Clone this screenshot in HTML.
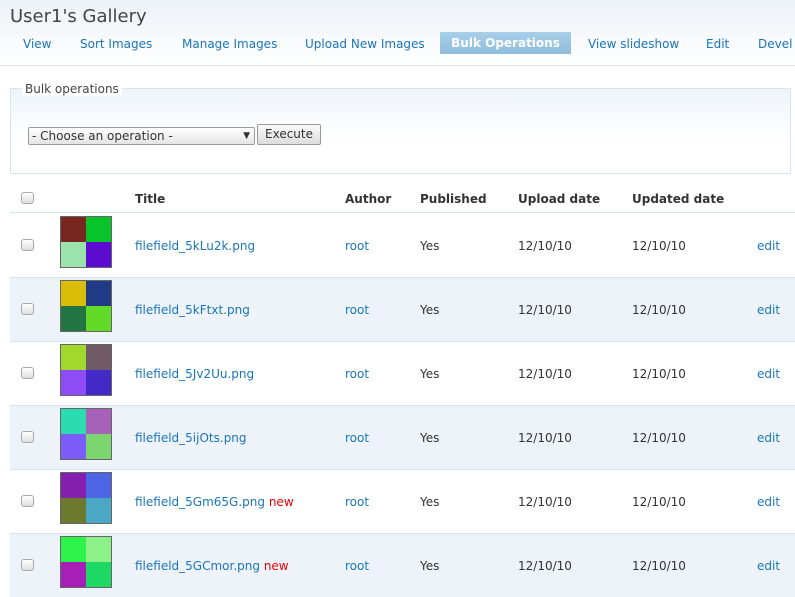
<!DOCTYPE html>
<html><head><meta charset="utf-8"><style>
body{margin:0;width:795px;height:596px;overflow:hidden;background:#fff;font-family:"DejaVu Sans","Liberation Sans",sans-serif;font-size:12px;color:#333;position:relative}
.a{position:absolute;white-space:nowrap;margin-top:1px}
.hdr{position:absolute;left:0;top:0;width:795px;height:65px;background:linear-gradient(#edf2f8,#fff);border-bottom:1px solid #e3e8ee}
.tab{color:#1a75bb;top:36px}
.act{position:absolute;left:440px;top:32px;width:131px;height:22px;background:linear-gradient(#a9cfe8,#8fbddd);color:#fff;font-weight:bold;text-align:center;line-height:23px}
.fs{position:absolute;left:10px;top:88px;width:779px;height:84px;border:1px solid #d6e4ef;background:linear-gradient(#eef4fa,#fff 60%)}
.row{position:absolute;left:10px;width:785px;height:63px;border-top:1px solid #d8e4ee}
.cb{position:absolute;left:21px;width:11px;height:10px;border:1px solid #aaa;border-radius:3px;background:linear-gradient(#fff,#ddd)}
.th{position:absolute;left:60px;width:50px;height:50px;border:1px solid #666;display:grid;grid-template-columns:1fr 1fr}
.th i{display:block}
.lk{color:#1a75bb}
.new{color:#e00}
</style></head><body>
<div class="hdr"></div>
<div class="a" style="left:10px;top:5px;font-size:18px;color:#444">User1's Gallery</div>
<div class="a tab" style="left:23px">View</div>
<div class="a tab" style="left:80px">Sort Images</div>
<div class="a tab" style="left:182px">Manage Images</div>
<div class="a tab" style="left:305px">Upload New Images</div>
<div class="act">Bulk Operations</div>
<div class="a tab" style="left:588px">View slideshow</div>
<div class="a tab" style="left:706px">Edit</div>
<div class="a tab" style="left:758px">Devel</div>
<div class="fs"></div>
<div class="a" style="left:22px;top:81px;background:#fff;padding:0 3px;color:#444">Bulk operations</div>
<div class="a" style="left:28px;top:126px;width:222px;height:16px;border:1px solid #999;border-radius:2px;background:linear-gradient(#fff,#e4e4e4);font-size:12px;line-height:16px;color:#333;padding-left:3px">- Choose an operation -<span style="position:absolute;right:4px;font-size:9px">▼</span></div>
<div class="a" style="left:257px;top:123px;width:62px;height:19px;border:1px solid #999;border-radius:2px;background:linear-gradient(#fafafa,#ddd);text-align:center;line-height:19px;font-size:12px">Execute</div>
<div class="cb" style="top:192px"></div>
<div class="a" style="left:135px;top:191px;font-weight:bold">Title</div>
<div class="a" style="left:345px;top:191px;font-weight:bold">Author</div>
<div class="a" style="left:420px;top:191px;font-weight:bold">Published</div>
<div class="a" style="left:518px;top:191px;font-weight:bold">Upload date</div>
<div class="a" style="left:632px;top:191px;font-weight:bold">Updated date</div>
<div style="position:absolute;left:10px;top:212px;width:785px;height:2px;background:#d4e4f0"></div>

<div class="row" style="top:213px;background:#fff;border-top:none"></div>
<div class="row" style="top:277px;background:#edf3f9"></div>
<div class="row" style="top:341px;background:#fff"></div>
<div class="row" style="top:405px;background:#edf3f9"></div>
<div class="row" style="top:469px;background:#fff"></div>
<div class="row" style="top:533px;background:#edf3f9"></div>

<div class="cb" style="top:239px"></div><div class="th" style="top:216px"><i style="background:#7a2620"></i><i style="background:#08c42a"></i><i style="background:#9ae3ac"></i><i style="background:#5c0bd0"></i></div>
<div class="a lk" style="left:135px;top:238px">filefield_5kLu2k.png</div>
<div class="cb" style="top:303px"></div><div class="th" style="top:280px"><i style="background:#d9bd08"></i><i style="background:#203a85"></i><i style="background:#237443"></i><i style="background:#62da28"></i></div>
<div class="a lk" style="left:135px;top:302px">filefield_5kFtxt.png</div>
<div class="cb" style="top:367px"></div><div class="th" style="top:344px"><i style="background:#a0d82e"></i><i style="background:#705a66"></i><i style="background:#8d4cf5"></i><i style="background:#4329c8"></i></div>
<div class="a lk" style="left:135px;top:366px">filefield_5Jv2Uu.png</div>
<div class="cb" style="top:431px"></div><div class="th" style="top:408px"><i style="background:#2bdcb0"></i><i style="background:#a662b8"></i><i style="background:#7c5cf8"></i><i style="background:#7cd670"></i></div>
<div class="a lk" style="left:135px;top:430px">filefield_5ijOts.png</div>
<div class="cb" style="top:495px"></div><div class="th" style="top:472px"><i style="background:#851fb0"></i><i style="background:#4d66e6"></i><i style="background:#6b7a2f"></i><i style="background:#4aa8c4"></i></div>
<div class="a lk" style="left:135px;top:494px">filefield_5Gm65G.png <span class="new">new</span></div>
<div class="cb" style="top:559px"></div><div class="th" style="top:536px"><i style="background:#2cf24a"></i><i style="background:#8ef088"></i><i style="background:#a81fb8"></i><i style="background:#1ed864"></i></div>
<div class="a lk" style="left:135px;top:558px">filefield_5GCmor.png <span class="new">new</span></div>

<div class="a lk" style="left:345px;top:238px">root</div><div class="a" style="left:420px;top:238px">Yes</div><div class="a" style="left:518px;top:238px">12/10/10</div><div class="a" style="left:632px;top:238px">12/10/10</div><div class="a lk" style="left:757px;top:238px">edit</div>
<div class="a lk" style="left:345px;top:302px">root</div><div class="a" style="left:420px;top:302px">Yes</div><div class="a" style="left:518px;top:302px">12/10/10</div><div class="a" style="left:632px;top:302px">12/10/10</div><div class="a lk" style="left:757px;top:302px">edit</div>
<div class="a lk" style="left:345px;top:366px">root</div><div class="a" style="left:420px;top:366px">Yes</div><div class="a" style="left:518px;top:366px">12/10/10</div><div class="a" style="left:632px;top:366px">12/10/10</div><div class="a lk" style="left:757px;top:366px">edit</div>
<div class="a lk" style="left:345px;top:430px">root</div><div class="a" style="left:420px;top:430px">Yes</div><div class="a" style="left:518px;top:430px">12/10/10</div><div class="a" style="left:632px;top:430px">12/10/10</div><div class="a lk" style="left:757px;top:430px">edit</div>
<div class="a lk" style="left:345px;top:494px">root</div><div class="a" style="left:420px;top:494px">Yes</div><div class="a" style="left:518px;top:494px">12/10/10</div><div class="a" style="left:632px;top:494px">12/10/10</div><div class="a lk" style="left:757px;top:494px">edit</div>
<div class="a lk" style="left:345px;top:558px">root</div><div class="a" style="left:420px;top:558px">Yes</div><div class="a" style="left:518px;top:558px">12/10/10</div><div class="a" style="left:632px;top:558px">12/10/10</div><div class="a lk" style="left:757px;top:558px">edit</div>
</body></html>
